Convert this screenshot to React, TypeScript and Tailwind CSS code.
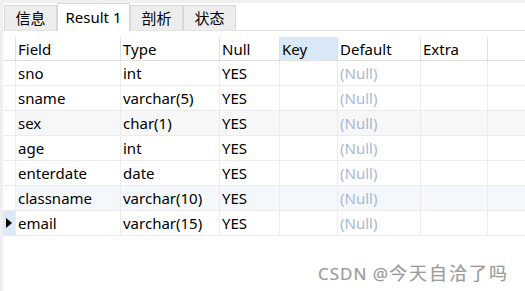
import React from "react";

const cols = [
  { key: "field", label: "Field", w: "w-[105px]" },
  { key: "type", label: "Type", w: "w-[99px]" },
  { key: "null", label: "Null", w: "w-[60px]" },
  { key: "key", label: "Key", w: "w-[58px]" },
  { key: "def", label: "Default", w: "w-[83px]" },
  { key: "extra", label: "Extra", w: "w-[67px]" },
];

const rows = [
  { field: "sno", type: "int", bg: "bg-white" },
  { field: "sname", type: "varchar(5)", bg: "bg-white" },
  { field: "sex", type: "char(1)", bg: "bg-[#f7f7f7]" },
  { field: "age", type: "int", bg: "bg-white" },
  { field: "enterdate", type: "date", bg: "bg-white" },
  { field: "classname", type: "varchar(10)", bg: "bg-[#f4f8fd]" },
  { field: "email", type: "varchar(15)", bg: "bg-white", current: true },
];

function Tab({ label, active }: { label: string; active?: boolean }) {
  if (active) {
    return (
      <div className="relative -mb-px flex h-[28px] w-[73px] items-center justify-center border border-b-0 border-[#d9d9d9] bg-white pb-[1px]">
        {label}
      </div>
    );
  }
  return (
    <div className="flex h-[25px] w-[53px] items-center justify-center border border-b-0 border-[#d9d9d9] bg-[#ededed]">
      {label}
    </div>
  );
}

export default function App() {
  return (
    <div className="relative h-[291px] w-[525px] overflow-hidden bg-white text-[15px] text-black font-['Noto_Sans','Noto_Sans_CJK_SC',sans-serif]">
      <div className="h-[3px] bg-[#f0f0f0]" />
      <div className="flex h-[288px]">
        <div className="w-[3px] bg-[#f0f0f0]" />
        <div className="flex flex-1 flex-col">
          <div className="flex h-[28px] items-end border-b border-[#e3e3e3] pl-[1px]">
            <Tab label="信息" />
            <Tab label="Result 1" active />
            <Tab label="剖析" />
            <Tab label="状态" />
          </div>
          <div className="mt-[6px] flex flex-col">
            <div className="flex h-[24px] border-b border-[#e0e0e0] pt-[1px] leading-[23px]">
              <div className="-mt-[1px] w-[13px] border-r border-[#e0e0e0]" />
              {cols.map((c) => (
                <div
                  key={c.key}
                  className={`${c.w} -mt-[1px] border-r border-[#e0e0e0] pl-[2px] pt-[1px] ${c.key === "key" ? "bg-[#dae9f7]" : ""}`}
                >
                  {c.label}
                </div>
              ))}
            </div>
            {rows.map((r) => (
              <div key={r.field} className={`flex h-[25px] border-b border-[#ececec] leading-[25px] ${r.bg}`}>
                <div
                  className={`flex w-[13px] items-center justify-center border-r border-[#ececec] ${r.current ? "bg-[#dae9f7]" : "bg-white"}`}
                >
                  {r.current && (
                    <svg width="6" height="10" viewBox="0 0 6 10">
                      <path d="M0 0 L6 5 L0 10 Z" fill="#000" />
                    </svg>
                  )}
                </div>
                <div className="w-[105px] border-r border-[#ececec] pl-[2px]">{r.field}</div>
                <div className="w-[99px] border-r border-[#ececec] pl-[2px]">{r.type}</div>
                <div className="w-[60px] border-r border-[#ececec] pl-[2px]">YES</div>
                <div className="w-[58px] border-r border-[#ececec] pl-[2px]" />
                <div className="w-[83px] border-r border-[#ececec] pl-[2px] text-[#aab8d2]">(Null)</div>
                <div className="w-[67px] border-r border-[#ececec]" />
              </div>
            ))}
          </div>
        </div>
      </div>
      <div className="absolute left-[318px] top-[260px] flex items-baseline text-[#9b9b9b] [text-shadow:0_0_1px_#d8d8d8]">
        <span className="text-[17px] tracking-[1px]">CSDN @</span>
        <span className="text-[18px] tracking-[2px]">今天自洽了吗</span>
      </div>
    </div>
  );
}
